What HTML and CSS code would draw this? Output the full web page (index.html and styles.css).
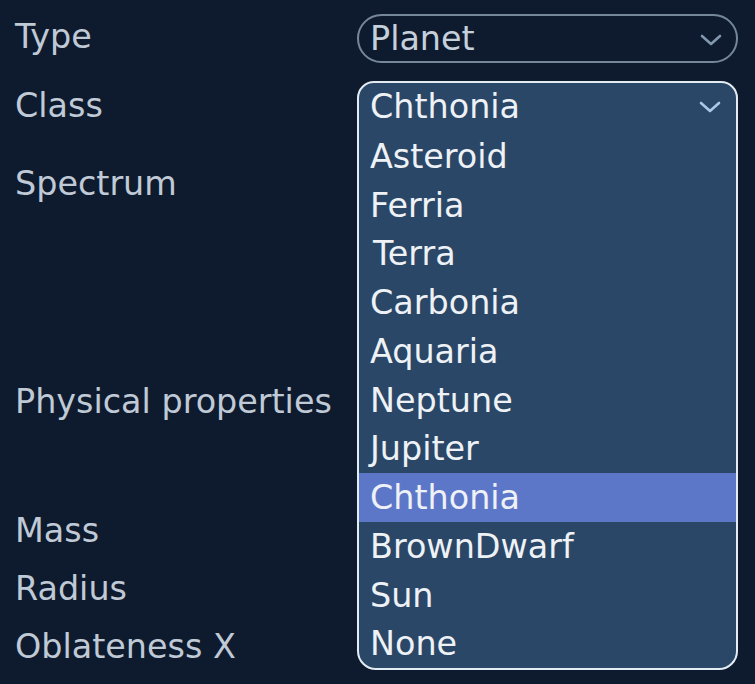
FILE: index.html
```html
<!DOCTYPE html>
<html lang="en">
<head>
<meta charset="utf-8">
<title>Body editor</title>
<link rel="stylesheet" href="styles.css">
</head>
<body>
<main class="form">
  <div class="row row-type">
    <span class="label label-up">Type</span>
    <div class="select">
      <span class="select-value">Planet</span>
      <svg class="chev chev-dim" viewBox="0 0 22 12" width="22" height="12"><polyline points="2,2 11,10 20,2"/></svg>
    </div>
  </div>
  <div class="row row-class">
    <span class="label label-up">Class</span>
    <div class="select-wrap">
      <div class="popup">
        <div class="popup-head">
          <span>Chthonia</span>
          <svg class="chev chev-bright" viewBox="0 0 22 12" width="22" height="12"><polyline points="2,2 11,10 20,2"/></svg>
        </div>
        <ul class="options">
          <li>Asteroid</li>
          <li>Ferria</li>
          <li class="opt-terra">Terra</li>
          <li>Carbonia</li>
          <li>Aquaria</li>
          <li>Neptune</li>
          <li>Jupiter</li>
          <li class="selected">Chthonia</li>
          <li>BrownDwarf</li>
          <li>Sun</li>
          <li>None</li>
        </ul>
      </div>
    </div>
  </div>
  <div class="row row-spectrum">
    <span class="label">Spectrum</span>
    <div></div>
  </div>
  <div class="row row-physical">
    <span class="label">Physical properties</span>
    <div></div>
  </div>
  <div class="row row-mass">
    <span class="label">Mass</span>
    <div></div>
  </div>
  <div class="row row-radius">
    <span class="label">Radius</span>
    <div></div>
  </div>
  <div class="row row-oblate">
    <span class="label">Oblateness X</span>
    <div></div>
  </div>
</main>
</body>
</html>
```
FILE: styles.css
```css
* { box-sizing: border-box; }

html, body {
  margin: 0;
  padding: 0;
  background: #0e1b2e;
  height: 100%;
  overflow: hidden;
}

body {
  font-family: "DejaVu Sans", "Noto Sans", sans-serif;
  font-size: 33.4px;
  color: #c0cad6;
}

.form {
  display: flex;
  flex-direction: column;
  padding-top: 12px;
}

.row {
  display: grid;
  grid-template-columns: 357px 381px;
  height: 49px;
  align-items: center;
}

.label {
  padding-left: 15px;
  line-height: 49px;
  white-space: nowrap;
}

.label-up { margin-bottom: 4px; }

.row-class { margin-top: 20px; }
.row-spectrum { margin-top: 29px; }
.row-physical { margin-top: 169px; }
.row-mass { margin-top: 80px; }
.row-radius { margin-top: 9px; }
.row-oblate { margin-top: 9px; }

.select {
  height: 49px;
  border: 2px solid #76879a;
  border-radius: 25px;
  display: flex;
  align-items: center;
  justify-content: space-between;
  padding: 0 14px 0 11px;
  color: #c6d0db;
}

.select-value { line-height: 45px; }

.chev {
  fill: none;
  stroke-width: 2.6;
  stroke-linecap: round;
  stroke-linejoin: round;
}
.chev-dim { stroke: #8197ad; margin-top: 2px; }
.chev-bright { stroke: #a9c9ea; }

.select-wrap {
  position: relative;
  height: 49px;
}

.popup {
  position: absolute;
  top: -2px;
  left: 0;
  width: 381px;
  border: 2px solid #e3ebf3;
  border-radius: 17px 17px 19px 19px;
  background: #2a4767;
  overflow: hidden;
  color: #eef2f6;
  z-index: 10;
}

.popup-head {
  height: 48.75px;
  line-height: 48.75px;
  display: flex;
  align-items: center;
  justify-content: space-between;
  padding: 0 15px 0 11px;
}

.options {
  list-style: none;
  margin: 0;
  padding: 0;
}

.options li {
  height: 48.75px;
  line-height: 46.75px;
  padding: 2px 0 0 11px;
  white-space: nowrap;
}

.options li.opt-terra { padding-left: 14px; }

.options li.selected {
  background: #5d77c8;
}
```
